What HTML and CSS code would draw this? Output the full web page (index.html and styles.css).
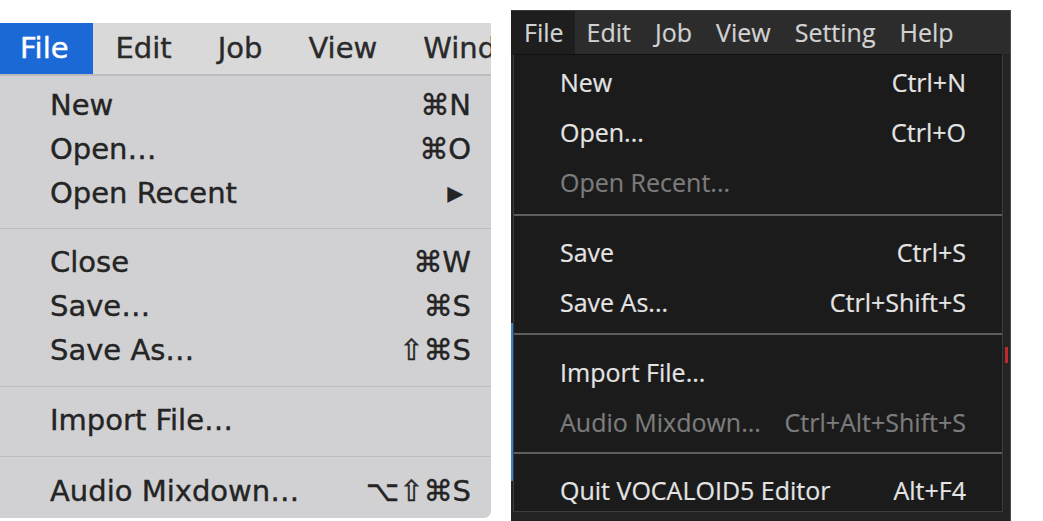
FILE: index.html
```html
<!DOCTYPE html>
<html lang="en">

<head>
  <meta charset="UTF-8" />
  <title>File Menu | Mac vs Windows</title>
  <link rel="stylesheet" href="styles.css">
</head>

<body>

  <!-- macOS style menu -->
  <div class="mac-menu">
    <div class="mac-bar">
      <span class="mac-title active">File</span>
      <span class="mac-title">Edit</span>
      <span class="mac-title">Job</span>
      <span class="mac-title">View</span>
      <span class="mac-title clipped">Window</span>
    </div>
    <div class="mac-drop">
      <div class="mac-group first">
        <div class="mac-row"><span>New</span><span>⌘N</span></div>
        <div class="mac-row"><span>Open…</span><span>⌘O</span></div>
        <div class="mac-row"><span>Open Recent</span><span class="mac-arrow">▶</span></div>
      </div>
      <div class="mac-group">
        <div class="mac-row"><span>Close</span><span>⌘W</span></div>
        <div class="mac-row"><span>Save…</span><span>⌘S</span></div>
        <div class="mac-row"><span>Save As…</span><span>⇧⌘S</span></div>
      </div>
      <div class="mac-group">
        <div class="mac-row"><span>Import File…</span><span></span></div>
      </div>
      <div class="mac-group last">
        <div class="mac-row"><span>Audio Mixdown…</span><span>⌥⇧⌘S</span></div>
      </div>
    </div>
  </div>

  <!-- Windows style menu -->
  <div class="win-menu">
    <div class="win-bar">
      <span class="win-title active">File</span>
      <span class="win-title">Edit</span>
      <span class="win-title">Job</span>
      <span class="win-title">View</span>
      <span class="win-title">Setting</span>
      <span class="win-title">Help</span>
    </div>
    <div class="win-drop">
      <div class="win-group g1">
        <div class="win-row"><span>New</span><span>Ctrl+N</span></div>
        <div class="win-row"><span>Open...</span><span>Ctrl+O</span></div>
        <div class="win-row disabled"><span>Open Recent...</span><span></span></div>
      </div>
      <div class="win-group g2">
        <div class="win-row"><span>Save</span><span>Ctrl+S</span></div>
        <div class="win-row"><span>Save As...</span><span>Ctrl+Shift+S</span></div>
      </div>
      <div class="win-group g3">
        <div class="win-row"><span>Import File...</span><span></span></div>
        <div class="win-row disabled"><span>Audio Mixdown...</span><span>Ctrl+Alt+Shift+S</span></div>
      </div>
      <div class="win-group g4">
        <div class="win-row"><span>Quit VOCALOID5 Editor</span><span>Alt+F4</span></div>
      </div>
    </div>
    <span class="win-mark blue"></span>
    <span class="win-mark red"></span>
  </div>

</body>

</html>
```

FILE: styles.css
```css
body {
  margin: 0;
  background: white;
  display: flex;
  align-items: flex-start;
  gap: 20px;
  overflow: hidden;
  height: 521px;
}

/* mac menu */
.mac-menu {
  margin-top: 23px;
  width: 491px;
  height: 495px;
  background: #d1d1d3;
  border-bottom-right-radius: 7px;
  overflow: hidden;
  font-family: "DejaVu Sans", sans-serif;
  font-size: 29px;
  color: #242424;
  -webkit-text-stroke: 0.4px currentColor;
}

.mac-bar {
  display: flex;
  height: 51px;
  background: #d9d9da;
  border-bottom: 2px solid #bcbcbe;
  white-space: nowrap;
  overflow: hidden;
}

.mac-title {
  padding: 0 23px;
  line-height: 51px;
  color: #2a2a2a;
}

.mac-title.active {
  background: #1a69d6;
  color: white;
  padding: 0 24px 0 20px;
}

.mac-title.clipped {
  flex: 1;
  min-width: 0;
  padding-right: 0;
  overflow: hidden;
}

.mac-group {
  padding: 11px 0 14px;
  border-bottom: 1px solid #bdbdbf;
}

.mac-group.first {
  padding-top: 7px;
  padding-bottom: 13px;
}

.mac-group.last {
  border-bottom: none;
  padding-top: 12px;
}

.mac-row {
  display: flex;
  justify-content: space-between;
  height: 44px;
  line-height: 44px;
  padding: 0 20px 0 50px;
}

.mac-arrow {
  font-size: 20px;
  padding-right: 8px;
}

/* windows menu */
.win-menu {
  position: relative;
  margin-top: 10px;
  width: 499px;
  height: 511px;
  background: #242424;
  border-right: 1px solid #4a4a4a;
  font-family: "Open Sans", sans-serif;
  font-size: 25px;
  -webkit-text-stroke: 0.2px currentColor;
}

.win-bar {
  display: flex;
  height: 43px;
  background: #2c2c2d;
  border-top: 1px solid #3a3a3a;
}

.win-title {
  padding: 0 12px;
  line-height: 43px;
  color: #d2d2d2;
}

.win-title.active {
  background: #1e1e1f;
  padding: 0 11px 0 13px;
}

.win-drop {
  margin: 0 7px 0 2px;
  background: #1b1b1b;
  border: 1px solid #3c3c3c;
  border-top-color: #111;
}

.win-group {
  border-bottom: 2px solid #5e5e5e;
}

.win-group.g1 {
  padding: 2px 0 7px;
}

.win-group.g2 {
  padding: 11px 0 6px;
}

.win-group.g3 {
  padding: 12px 0 5px;
}

.win-group.g4 {
  padding: 11px 0 2px;
  border-bottom: none;
}

.win-row {
  display: flex;
  justify-content: space-between;
  height: 50px;
  line-height: 50px;
  padding: 0 36px 0 46px;
  color: #e4e4e4;
}

.win-group.g4 .win-row {
  height: 44px;
}

.win-row.disabled {
  color: #7c7c7c;
}

.win-mark {
  position: absolute;
}

.win-mark.blue {
  left: 0;
  top: 313px;
  width: 2px;
  height: 158px;
  background: #3a7fd0;
}

.win-mark.red {
  right: 2px;
  top: 337px;
  width: 3px;
  height: 16px;
  background: #c0282a;
}
```
